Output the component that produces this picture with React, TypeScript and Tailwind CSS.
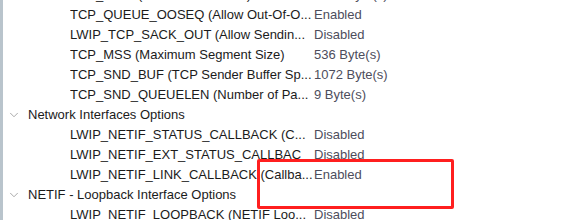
import { ChevronDown } from "lucide-react"

type Row =
  | { kind: "item"; label: string; value: string }
  | { kind: "group"; label: string }

const rows: Row[] = [
  { kind: "item", label: "TCP_WND (TCP Window Size)", value: "2144 Byte(s)" },
  { kind: "item", label: "TCP_QUEUE_OOSEQ (Allow Out-Of-O...", value: "Enabled" },
  { kind: "item", label: "LWIP_TCP_SACK_OUT (Allow Sendin...", value: "Disabled" },
  { kind: "item", label: "TCP_MSS (Maximum Segment Size)", value: "536 Byte(s)" },
  { kind: "item", label: "TCP_SND_BUF (TCP Sender Buffer Sp...", value: "1072 Byte(s)" },
  { kind: "item", label: "TCP_SND_QUEUELEN (Number of Pa...", value: "9 Byte(s)" },
  { kind: "group", label: "Network Interfaces Options" },
  { kind: "item", label: "LWIP_NETIF_STATUS_CALLBACK (C...", value: "Disabled" },
  { kind: "item", label: "LWIP_NETIF_EXT_STATUS_CALLBAC", value: "Disabled" },
  { kind: "item", label: "LWIP_NETIF_LINK_CALLBACK (Callba...", value: "Enabled" },
  { kind: "group", label: "NETIF - Loopback Interface Options" },
  { kind: "item", label: "LWIP_NETIF_LOOPBACK (NETIF Loo...", value: "Disabled" },
]

function App() {
  return (
    <div className="relative flex h-[220px] w-[566px] overflow-hidden bg-white font-['Liberation_Sans',Arial,sans-serif] text-[13px]">
      {/* left frame edge */}
      <div className="w-[3px] shrink-0 bg-[#b9c4cc]" />

      <div className="-mt-[15px] flex flex-1 flex-col">
        {rows.map((row, i) =>
          row.kind === "group" ? (
            <div key={i} className="flex h-[20px] shrink-0 items-center whitespace-nowrap text-[#1b1b1b]">
              <ChevronDown className="ml-[4px] mr-[7px] h-[14px] w-[14px] text-[#8a8a8a]" strokeWidth={1.25} />
              <span>{row.label}</span>
            </div>
          ) : (
            <div key={i} className="flex h-[20px] shrink-0 items-center whitespace-nowrap">
              <span className="ml-[67px] w-[244px] overflow-hidden text-[#1b1b1b]">{row.label}</span>
              <span className="text-[#4d4d5c]">{row.value}</span>
            </div>
          )
        )}
      </div>

      {/* annotation box */}
      <div className="absolute left-[257px] top-[159px] h-[50px] w-[197px] rounded-[2px] border-[3px] border-[#ff1f1f]" />
    </div>
  )
}

export default App
